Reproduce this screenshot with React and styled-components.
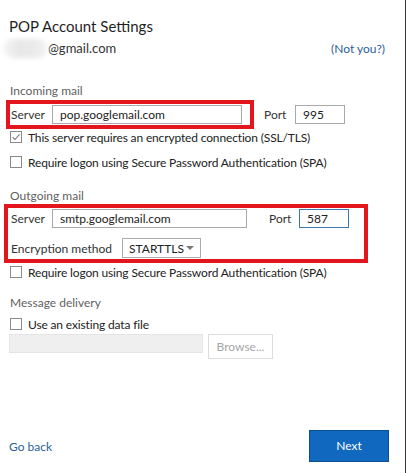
import React from 'react'
import styled, { createGlobalStyle } from 'styled-components'

const GlobalStyle = createGlobalStyle`
    html, body {
        margin     : 0;
        padding    : 0;
        background : #fff;
    }
    body {
        font-family : Lato, "Open Sans", sans-serif;
        color       : #222;
    }
`

const App = () => {
    return (
        <Dialog>
            <GlobalStyle />
            <Title>POP Account Settings</Title>
            <AccountRow>
                <Account>
                    <Blur />
                    <span>@gmail.com</span>
                </Account>
                <Link>(Not you?)</Link>
            </AccountRow>

            <Section $top={24}>
                <SectionLabel>Incoming mail</SectionLabel>
                <FieldRow $height={29} $top={1}>
                    <Highlight $pad="0 8px 0 0" $left={-3}>
                        <FieldLabel $width={42}>Server</FieldLabel>
                        <TextInput $width={190}>pop.googlemail.com</TextInput>
                    </Highlight>
                    <FieldLabel $width={32} $left={9}>Port</FieldLabel>
                    <TextInput $width={50}>995</TextInput>
                </FieldRow>
                <Check checked top={0} label='This server requires an encrypted connection (SSL/TLS)' />
                <Check top={9} label='Require logon using Secure Password Authentication (SPA)' />
            </Section>

            <Section $top={18}>
                <SectionLabel>Outgoing mail</SectionLabel>
                <Highlight $pad="0 15px 1px 2px" $left={-5} $column>
                    <FieldRow>
                        <FieldLabel $width={42}>Server</FieldLabel>
                        <TextInput $width={195}>smtp.googlemail.com</TextInput>
                        <FieldLabel $width={31} $left={21}>Port</FieldLabel>
                        <TextInput $width={50} $focused>587</TextInput>
                    </FieldRow>
                    <FieldRow>
                        <FieldLabel $width={112}>Encryption method</FieldLabel>
                        <Select>
                            <span>STARTTLS</span>
                            <svg width="8" height="4" viewBox="0 0 8 4">
                                <path d="M0 0h8L4 4z" fill="#7a7a7a" />
                            </svg>
                        </Select>
                    </FieldRow>
                </Highlight>
                <Check top={1} label='Require logon using Secure Password Authentication (SPA)' />
            </Section>

            <Section $top={15}>
                <SectionLabel>Message delivery</SectionLabel>
                <Check top={5} label='Use an existing data file' />
                <FileRow>
                    <DisabledInput />
                    <BrowseButton>Browse...</BrowseButton>
                </FileRow>
            </Section>

            <Footer>
                <Link>Go back</Link>
                <NextButton>Next</NextButton>
            </Footer>
        </Dialog>
    )
}

const Check = ({ checked, label, top }) => (
    <CheckRow $top={top}>
        <Box>
            {checked && (
                <svg width="10" height="10" viewBox="0 0 10 10">
                    <path d="M1.6 5.1 L4 7.5 L8.5 2.3" fill="none" stroke="#7a7a7a" strokeWidth="1.1" />
                </svg>
            )}
        </Box>
        <CheckText>{label}</CheckText>
    </CheckRow>
)

export default App

const Dialog = styled.div`
    box-sizing     : border-box;
    width          : 406px;
    height         : 473px;
    padding        : 16px 0 0 9px;
    border-right   : 1px solid #3a3a3a;
    display        : flex;
    flex-direction : column;
    font-size      : 12px;
`

const Title = styled.div`
    font-size   : 15px;
    font-weight : 400;
    line-height : 21px;
    color       : #1f1f1f;
`

const AccountRow = styled.div`
    display         : flex;
    align-items     : center;
    justify-content : space-between;
    height          : 22px;
    padding-right   : 20px;
`

const Account = styled.div`
    display     : flex;
    align-items : center;
    color       : #333;
    font-size   : 13px;
`

const Blur = styled.div`
    width         : 44px;
    height        : 19px;
    margin-left   : -5px;
    border-radius : 9px;
    background    : linear-gradient(90deg, #f3f3f3, #e8e8e8 35%, #eaeaea 70%, #f6f6f6);
    filter        : blur(2px);
`

const Link = styled.span`
    color : #2b5f99;
`

const Section = styled.div`
    display        : flex;
    flex-direction : column;
    margin-top     : ${p => p.$top}px;
`

const SectionLabel = styled.div`
    color       : #5f5f5f;
    line-height : 16px;
    margin-left : 1px;
`

const Highlight = styled.div`
    box-sizing     : border-box;
    display        : flex;
    flex-direction : ${p => (p.$column ? 'column' : 'row')};
    align-items    : ${p => (p.$column ? 'flex-start' : 'center')};
    gap            : ${p => (p.$column ? 10 : 0)}px;
    align-self     : ${p => (p.$column ? 'flex-start' : 'stretch')};
    margin-left    : ${p => p.$left}px;
    padding        : ${p => p.$pad};
    border         : 4px solid #e3161e;
`

const FieldRow = styled.div`
    display     : flex;
    align-items : center;
    height      : ${p => p.$height || 20}px;
    margin-top  : ${p => p.$top || 0}px;
`

const FieldLabel = styled.span`
    flex         : none;
    box-sizing   : border-box;
    width        : ${p => p.$width}px;
    margin-left  : ${p => p.$left || 0}px;
    padding-left : 1px;
    color        : #333;
`

const TextInput = styled.div`
    flex        : none;
    box-sizing  : border-box;
    width       : ${p => p.$width}px;
    height      : 19px;
    padding     : 0 7px;
    border      : 1px solid ${p => (p.$focused ? '#3b79b3' : '#a9a9a9')};
    line-height : 17px;
    color       : #222;
`

const Select = styled.div`
    box-sizing      : border-box;
    display         : flex;
    align-items     : center;
    justify-content : space-between;
    width           : 79px;
    height          : 20px;
    padding         : 0 6px 0 6px;
    border          : 1px solid #ababab;
    color           : #222;
`

const CheckRow = styled.div`
    display     : flex;
    align-items : center;
    gap         : 6px;
    height      : 16px;
    margin-top  : ${p => p.$top}px;
    margin-left : 1px;
    color       : #222;
`

const CheckText = styled.span`
    letter-spacing : -0.15px;
`

const Box = styled.div`
    box-sizing      : border-box;
    display         : flex;
    align-items     : center;
    justify-content : center;
    width           : 12px;
    height          : 12px;
    border          : 1px solid #8a8a8a;
`

const FileRow = styled.div`
    display     : flex;
    align-items : flex-start;
    gap         : 5px;
    margin-top  : 2px;
`

const DisabledInput = styled.div`
    box-sizing : border-box;
    width      : 194px;
    height     : 19px;
    background : #efefef;
    border     : 1px solid #e4e4e4;
`

const BrowseButton = styled.div`
    box-sizing  : border-box;
    width       : 65px;
    height      : 25px;
    border      : 1px solid #dcdcdc;
    color       : #a6a6a6;
    line-height : 23px;
    text-align  : center;
`

const Footer = styled.div`
    display         : flex;
    align-items     : center;
    justify-content : space-between;
    margin-top      : auto;
    margin-bottom   : 11px;
    padding-right   : 16px;
`

const NextButton = styled.div`
    box-sizing  : border-box;
    width       : 80px;
    height      : 32px;
    background  : #1068bf;
    border      : 1px solid #0a4f94;
    color       : #fff;
    line-height : 30px;
    text-align  : center;
`
